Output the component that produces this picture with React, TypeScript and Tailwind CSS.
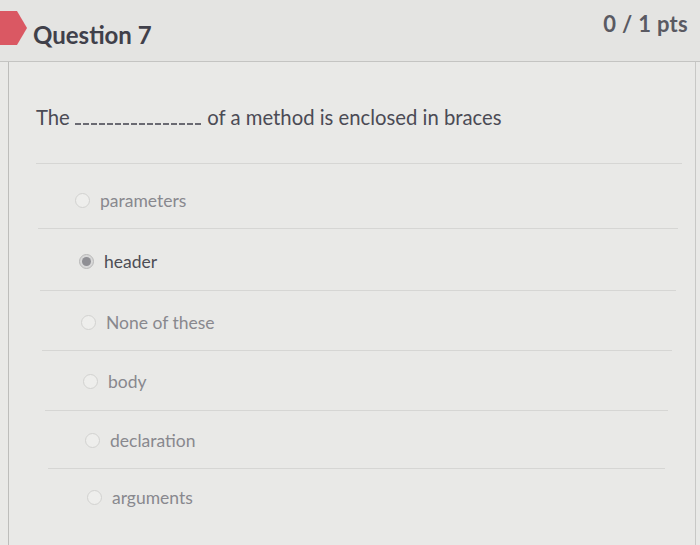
const options = [
  { id: 1, label: "parameters", rowClass: "h-[65px] ml-[27px] mr-[13px] pt-[28px]", radioClass: "ml-[39px]", selected: false },
  { id: 2, label: "header", rowClass: "h-[62px] ml-[29px] mr-[17px] pt-[24px]", radioClass: "ml-[41px]", selected: true },
  { id: 3, label: "None of these", rowClass: "h-[60px] ml-[31px] mr-[19px] pt-[23px]", radioClass: "ml-[41px]", selected: false },
  { id: 4, label: "body", rowClass: "h-[60px] ml-[33px] mr-[23px] pt-[22px]", radioClass: "ml-[41px]", selected: false },
  { id: 5, label: "declaration", rowClass: "h-[58px] ml-[36px] mr-[27px] pt-[21px]", radioClass: "ml-[40px]", selected: false },
  { id: 6, label: "arguments", rowClass: "h-[77px] ml-[39px] mr-[30px] pt-[20px]", radioClass: "ml-[39px]", selected: false },
];

function Radio({ selected }: { selected: boolean }) {
  if (selected) {
    return (
      <span className="flex h-[15px] w-[15px] items-center justify-center rounded-full border border-[#b9b9b9] bg-[#d8d8d8]">
        <span className="h-[9px] w-[9px] rounded-full bg-[#8f8f94]" />
      </span>
    );
  }
  return <span className="h-[15px] w-[15px] rounded-full border border-[#d2d2d0] bg-[#eeeeec]" />;
}

export default function App() {
  return (
    <div
      className="h-[545px] w-[700px] overflow-hidden bg-[#e9e9e7] text-[#4a4a52]"
      style={{ fontFamily: "Lato, 'Noto Sans', sans-serif" }}
    >
      {/* header */}
      <div className="flex h-[62px] items-start border-b border-[#c4c4c2] bg-[#e4e4e2]">
        <svg width="28" height="36" viewBox="0 0 28 36" className="mt-[11px] shrink-0">
          <polygon points="0,0 17,0 27,17 17,34 0,34" fill="#da5863" />
        </svg>
        <h1 className="ml-[5px] mt-[23px] text-[24px] font-bold leading-none text-[#40404a]">
          Question 7
        </h1>
        <div className="ml-auto mr-[12px] mt-[13px] text-[22px] font-bold leading-none tracking-[0.3px] text-[#5a5a62]">
          0 / 1 pts
        </div>
      </div>

      {/* body */}
      <div className="ml-[8px] mr-[4px] h-[483px] border-l border-r border-l-[#bdbdbb] border-r-[#c8c8c6]">
        <p className="ml-[27px] h-[101px] pt-[45px] text-[20.3px] leading-none text-[#4b4b55]">
          The{" "}
          <span className="inline-block h-[2px] w-[127px] bg-[repeating-linear-gradient(90deg,#6a6a72_0_6px,transparent_6px_8px)] align-baseline" />{" "}
          of a method is enclosed in braces
        </p>
        {options.map((option) => (
          <div key={option.id} className={`flex items-start border-t border-[#d6d6d4] ${option.rowClass}`}>
            <div className={`flex items-center gap-[10px] ${option.radioClass}`}>
              <Radio selected={option.selected} />
              <span
                className={`text-[17.5px] leading-none ${
                  option.selected ? "text-[#4d4d55]" : "text-[#88888e]"
                }`}
              >
                {option.label}
              </span>
            </div>
          </div>
        ))}
      </div>
    </div>
  );
}
